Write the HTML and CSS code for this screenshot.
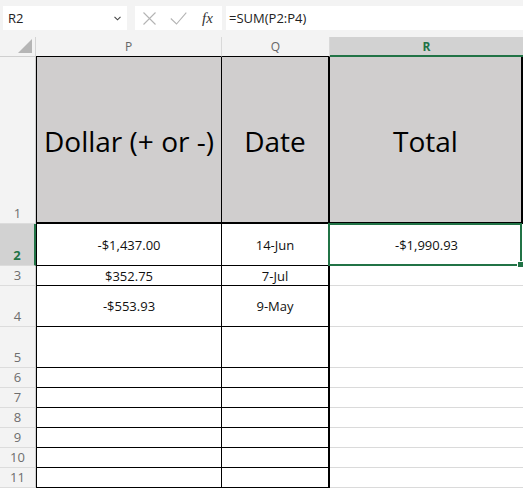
FILE: index.html
```html
<!DOCTYPE html>
<html lang="en">
<head>
    <meta charset="UTF-8">
    <meta name="viewport" content="width=device-width, initial-scale=1.0">
    <title>Sheet - Totals</title>
    <link rel="stylesheet" href="styles.css">
</head>
<body>
    <div class="formula-bar">
        <div class="name-box">
            <span>R2</span>
            <svg class="chevron" width="7" height="5" viewBox="0 0 7 5"><path d="M0.5 0.8 L3.5 3.8 L6.5 0.8" fill="none" stroke="#444" stroke-width="1.1"/></svg>
        </div>
        <div class="fx-box">
            <svg class="icon-cancel" width="13" height="13" viewBox="0 0 13 13"><path d="M0.5 0.5 L12.5 12.5 M12.5 0.5 L0.5 12.5" stroke="#b4b4b4" stroke-width="1.1"/></svg>
            <svg class="icon-enter" width="17" height="13" viewBox="0 0 17 13"><path d="M0.8 6.5 L6.5 12 L16.3 0.6" fill="none" stroke="#b4b4b4" stroke-width="1.1"/></svg>
            <span class="fx">fx</span>
        </div>
        <div class="formula">=SUM(P2:P4)</div>
    </div>

    <div class="sheet">
        <!-- column headers -->
        <div class="corner"></div>
        <div class="ch">P</div>
        <div class="ch">Q</div>
        <div class="ch active">R</div>

        <!-- row 1 -->
        <div class="rh">1</div>
        <div class="cell p title">Dollar (+ or -)</div>
        <div class="cell q title">Date</div>
        <div class="cell r title">Total</div>

        <!-- row 2 -->
        <div class="rh active">2</div>
        <div class="cell p">-$1,437.00</div>
        <div class="cell q">14-Jun</div>
        <div class="cell r selected">-$1,990.93<span class="sel"></span></div>

        <!-- row 3 -->
        <div class="rh">3</div>
        <div class="cell p">$352.75</div>
        <div class="cell q">7-Jul</div>
        <div class="cell r"></div>

        <!-- row 4 -->
        <div class="rh">4</div>
        <div class="cell p">-$553.93</div>
        <div class="cell q">9-May</div>
        <div class="cell r"></div>

        <div class="rh">5</div>
        <div class="cell p"></div>
        <div class="cell q"></div>
        <div class="cell r"></div>

        <div class="rh">6</div>
        <div class="cell p"></div>
        <div class="cell q"></div>
        <div class="cell r"></div>

        <div class="rh">7</div>
        <div class="cell p"></div>
        <div class="cell q"></div>
        <div class="cell r"></div>

        <div class="rh">8</div>
        <div class="cell p"></div>
        <div class="cell q"></div>
        <div class="cell r"></div>

        <div class="rh">9</div>
        <div class="cell p"></div>
        <div class="cell q"></div>
        <div class="cell r"></div>

        <div class="rh">10</div>
        <div class="cell p"></div>
        <div class="cell q"></div>
        <div class="cell r"></div>

        <div class="rh">11</div>
        <div class="cell p"></div>
        <div class="cell q"></div>
        <div class="cell r"></div>
    </div>
</body>
</html>
```

FILE: styles.css
```css
body {
    margin: 0;
    width: 523px;
    height: 488px;
    overflow: hidden;
    background: #fff;
    font-family: 'Open Sans', sans-serif;
    color: #000;
}

/* formula bar */
.formula-bar {
    height: 37px;
    box-sizing: border-box;
    padding-top: 6px;
    background: #f3f3f3;
    display: flex;
    align-items: flex-start;
}

.name-box {
    margin-left: 3px;
    width: 124px;
    height: 24px;
    box-sizing: border-box;
    padding: 0 6px 0 5px;
    background: #fff;
    display: flex;
    align-items: center;
    justify-content: space-between;
    font-size: 13px;
    color: #222;
}

.fx-box {
    margin-left: 8px;
    width: 87px;
    height: 24px;
    background: #fff;
    display: flex;
    align-items: center;
}

.icon-cancel {
    margin-left: 8px;
}

.icon-enter {
    margin-left: 14px;
}

.fx {
    margin-left: 15px;
    font-family: 'Liberation Serif', serif;
    font-style: italic;
    font-size: 15px;
    color: #333;
}

.formula {
    margin-left: 4px;
    flex: 1;
    height: 24px;
    box-sizing: border-box;
    padding-left: 3px;
    background: #fff;
    display: flex;
    align-items: center;
    font-size: 13px;
    color: #222;
}

/* grid */
.sheet {
    display: grid;
    grid-template-columns: 36px 186px 108px 193px;
    grid-template-rows: 20px 167px 42px 20px 41px 41px repeat(6, 20px);
}

.sheet > div {
    box-sizing: border-box;
}

.corner {
    background: #f3f3f3;
    border-right: 1px solid #d4d4d4;
    border-bottom: 1px solid #cfcfcf;
    display: flex;
    align-items: flex-end;
    justify-content: flex-end;
    padding: 0 3px 3px 0;
}

.corner::after {
    content: '';
    width: 14px;
    height: 14px;
    background: #b5b5b5;
    clip-path: polygon(100% 0, 100% 100%, 0 100%);
}

.ch {
    background: #f3f3f3;
    border-right: 1px solid #d9d9d9;
    border-bottom: 1px solid #000;
    display: flex;
    align-items: center;
    justify-content: center;
    font-size: 12px;
    color: #666;
}

.ch.active {
    background: #d2d2d2;
    color: #217346;
    font-weight: bold;
    border-right: none;
    border-bottom: 2px solid #217346;
}

.rh {
    background: #f3f3f3;
    border-right: 1px solid #cfcfcf;
    border-bottom: 1px solid #dcdcdc;
    display: flex;
    align-items: flex-end;
    justify-content: center;
    padding-bottom: 1px;
    font-size: 13px;
    color: #6e6e6e;
}

.rh.active {
    background: #d2d2d2;
    color: #217346;
    font-weight: bold;
    border-right: 2px solid #217346;
}

.cell {
    display: flex;
    align-items: center;
    justify-content: center;
    font-size: 13px;
    color: #111;
}

.p {
    border-left: 1px solid #000;
    border-right: 1px solid #000;
    border-bottom: 1px solid #000;
}

.q {
    border-right: 2px solid #000;
    border-bottom: 1px solid #000;
}

.r {
    border-bottom: 1px solid #dadada;
}

.title {
    background: #d0cece;
    font-size: 28px;
    padding-top: 3px;
    color: #000;
    border-bottom: 2px solid #000;
}

.r.title {
    border-right: 2px solid #000;
}

.selected {
    position: relative;
}

.sel {
    position: absolute;
    top: -1px;
    left: -2px;
    right: 1px;
    bottom: -1px;
    border: 2px solid #217346;
}

.sel::after {
    content: '';
    position: absolute;
    right: -4px;
    bottom: -4px;
    width: 5px;
    height: 5px;
    background: #217346;
    border: 1px solid #fff;
}
```
